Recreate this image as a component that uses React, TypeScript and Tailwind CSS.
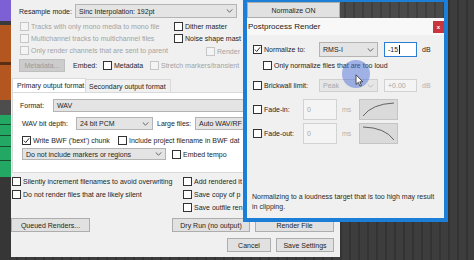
import type { ReactNode } from "react";

function Check({ checked = false, disabled = false }: { checked?: boolean; disabled?: boolean }) {
  return (
    <span
      className={`flex h-[9px] w-[9px] shrink-0 items-center justify-center border ${
        disabled ? "border-[#c6c6c6] bg-[#f4f4f4]" : "border-[#333333] bg-white"
      }`}
    >
      {checked && (
        <svg viewBox="0 0 8 8" className="h-[7px] w-[7px]">
          <path d="M1 4.2 3.1 6.3 7 1.5" fill="none" stroke="#222" strokeWidth="1.1" />
        </svg>
      )}
    </span>
  );
}

function CheckRow({
  label,
  checked,
  disabled,
  className = ""
}: {
  label: string;
  checked?: boolean;
  disabled?: boolean;
  className?: string;
}) {
  return (
    <div className={`flex shrink-0 items-center gap-[2px] overflow-hidden whitespace-nowrap ${className}`}>
      <Check checked={checked} disabled={disabled} />
      <span className={disabled ? "text-[#a3a3a3]" : "text-[#1e1e1e]"}>{label}</span>
    </div>
  );
}

function Chevron({ muted }: { muted?: boolean }) {
  return (
    <svg viewBox="0 0 8 5" className="h-[4px] w-[7px] shrink-0">
      <path d="M0.5 0.5 4 4 7.5 0.5" fill="none" stroke={muted ? "#b0b0b0" : "#444"} strokeWidth="1" />
    </svg>
  );
}

function Select({ label, className = "", disabled }: { label: string; className?: string; disabled?: boolean }) {
  return (
    <div
      className={`flex shrink-0 items-center justify-between overflow-hidden whitespace-nowrap border px-[3px] ${
        disabled ? "border-[#cfcfcf] bg-[#e6e6e6] text-[#a8a8a8]" : "border-[#b4b4b4] bg-[#e4e4e4]"
      } ${className}`}
    >
      <span>{label}</span>
      <Chevron muted={disabled} />
    </div>
  );
}

function Btn({ children, className = "", disabled }: { children: ReactNode; className?: string; disabled?: boolean }) {
  return (
    <div
      className={`flex h-full shrink-0 items-center justify-center whitespace-nowrap border ${
        disabled ? "border-[#bfbfbf] bg-[#cccccc] text-[#9b9b9b]" : "border-[#adadad] bg-[#e1e1e1]"
      } ${className}`}
    >
      {children}
    </div>
  );
}

function Field({ value, className = "", focused }: { value: string; className?: string; focused?: boolean }) {
  return (
    <div
      className={`flex h-full shrink-0 items-center border px-[3px] ${
        focused ? "border-[#2a7fd4] bg-white text-[#1e1e1e]" : "border-[#d2d2d2] bg-[#f4f4f4] text-[#a8a8a8]"
      } ${className}`}
    >
      {value}
      {focused && <span className="ml-[1px] h-[9px] w-[1px] bg-[#111]" />}
    </div>
  );
}

function TrackStrip() {
  return (
    <div className="flex w-[11px] shrink-0 flex-col">
      <div className="h-[21px] bg-[#7c60d4]" />
      <div className="h-[4px] bg-[#3a3a3a]" />
      <div className="h-[37px] bg-[#b3561f]" />
      <div className="h-[3px] bg-[#5a2e12]" />
      <div className="h-[35px] bg-[#b3561f]" />
      <div className="h-[15px] bg-[#4d4d4d]" />
      <div className="h-[9px] bg-[#22a863]" />
      <div className="h-[1px] bg-[#1a4a30]" />
      <div className="h-[10px] bg-[#22a863]" />
      <div className="h-[1px] bg-[#1a4a30]" />
      <div className="h-[10px] bg-[#22a863]" />
      <div className="h-[1px] bg-[#1a4a30]" />
      <div className="h-[13px] bg-[#22a863]" />
      <div className="h-[1px] bg-[#1a4a30]" />
      <div className="h-[16px] bg-[#22a863]" />
      <div className="flex-1 bg-[#363636]" />
    </div>
  );
}

// the right part of this dialog sits under the postprocess window; labels there
// only show what is visible up to its edge (x 243)
function RenderDialog() {
  return (
    <div className="flex h-[257px] w-[329px] shrink-0 flex-col bg-[#f0f0f0]">
      <div className="mt-[4px] flex h-[14px] items-center">
        <span className="ml-[8px] w-[56px] shrink-0">Resample mode:</span>
        <Select className="h-[14px] w-[162px]" label="Sinc Interpolation: 192pt" />
      </div>

      <div className="mt-[2px] flex h-[12px] items-center pl-[9px]">
        <CheckRow disabled className="w-[154px]" label="Tracks with only mono media to mono file" />
        <CheckRow className="w-[69px]" label="Dither master" />
      </div>
      <div className="flex h-[12px] items-center pl-[9px]">
        <CheckRow disabled className="w-[154px]" label="Multichannel tracks to multichannel files" />
        <CheckRow className="w-[69px]" label="Noise shape mast" />
      </div>
      <div className="flex h-[12px] items-center pl-[9px]">
        <CheckRow disabled className="w-[186px]" label="Only render channels that are sent to parent" />
        <CheckRow disabled className="mt-[3px] w-[37px]" label="Render" />
      </div>

      <div className="mt-[3px] flex h-[13px] items-center pl-[8px]">
        <Btn disabled className="w-[46px]">
          Metadata...
        </Btn>
        <span className="ml-[8px] w-[30px] shrink-0">Embed:</span>
        <CheckRow className="w-[47px]" label="Metadata" />
        <CheckRow disabled className="w-[93px]" label="Stretch markers/transient" />
      </div>

      <div className="mt-[7px] flex h-[13px] items-end pl-[1px]">
        <div className="flex h-[14px] w-[74px] items-center border border-b-0 border-[#d9d9d9] bg-white pl-[4px]">
          Primary output format
        </div>
        <div className="flex h-[13px] w-[85px] items-center border border-b-0 border-l-0 border-[#d9d9d9] pl-[3px]">
          Secondary output format
        </div>
      </div>

      <div className="ml-[1px] flex h-[81px] w-[322px] flex-col border border-[#d9d9d9] bg-white">
        <div className="mt-[6px] flex h-[13px] items-center pl-[7px]">
          <span className="w-[33px] shrink-0">Format:</span>
          <Select className="h-[13px] w-[270px]" label="WAV" />
        </div>
        <div className="mt-[5px] flex h-[13px] items-center pl-[9px]">
          <span className="w-[54px] shrink-0">WAV bit depth:</span>
          <Select className="h-[13px] w-[77px]" label="24 bit PCM" />
          <span className="ml-[4px] w-[38px] shrink-0">Large files:</span>
          <Select className="h-[13px] w-[110px]" label="Auto WAV/RF" />
        </div>
        <div className="mt-[5px] flex h-[10px] items-center pl-[9px]">
          <CheckRow checked className="w-[96px]" label="Write BWF ('bext') chunk" />
          <CheckRow className="w-[125px]" label="Include project filename in BWF dat" />
        </div>
        <div className="mt-[3px] flex h-[12px] items-center pl-[9px]">
          <Select className="h-[12px] w-[144px]" label="Do not include markers or regions" />
          <CheckRow className="ml-[6px]" label="Embed tempo" />
        </div>
      </div>

      <div className="mt-[2px] flex h-[13px] items-center pl-[1px]">
        <CheckRow className="w-[171px]" label="Silently increment filenames to avoid overwriting" />
        <CheckRow className="w-[60px]" label="Add rendered it" />
      </div>
      <div className="flex h-[13px] items-center pl-[1px]">
        <CheckRow className="w-[171px]" label="Do not render files that are likely silent" />
        <CheckRow className="w-[60px]" label="Save copy of p" />
      </div>
      <div className="flex h-[13px] items-center pl-[172px]">
        <CheckRow className="w-[60px]" label="Save outfile ren" />
      </div>

      <div className="mt-[4px] flex h-[14px] items-center">
        <Btn className="w-[79px]">Queued Renders...</Btn>
        <Btn className="ml-[82px] w-[78px]">Dry Run (no output)</Btn>
        <Btn className="ml-[5px] w-[79px]">Render File</Btn>
      </div>
      <div className="mt-[6px] flex h-[14px] items-center">
        <Btn className="ml-[216px] w-[44px]">Cancel</Btn>
        <Btn className="ml-[5px] w-[58px]">Save Settings</Btn>
      </div>
    </div>
  );
}

function FadeCurve({ out }: { out?: boolean }) {
  return (
    <div className="h-full w-[39px] shrink-0 border border-[#c4c4c4] bg-[#dadada]">
      <svg viewBox="0 0 37 19" className="h-full w-full">
        <path
          d={out ? "M3 3 Q25 3.5 34 16" : "M3 16 Q12 4 34 3"}
          fill="none"
          stroke="#555"
          strokeWidth="0.9"
        />
      </svg>
    </div>
  );
}

function PostprocessWindow() {
  return (
    <div className="absolute left-[243px] top-0 flex h-[222px] w-[205px] flex-col border-[4px] border-t-[2px] border-[#1b7fd7] bg-[#f0f0f0]">
      <div className="flex h-[16px] shrink-0 bg-[repeating-linear-gradient(90deg,#4a4a4a_0px,#4a4a4a_7px,#3f3f3f_7px,#3f3f3f_9px)]">
        <Btn className="h-[15px] w-[93px]">Normalize ON</Btn>
      </div>
      <div className="flex h-[17px] shrink-0 items-center justify-between bg-[#f8f8f8] pl-[1px]">
        <span className="text-[8px] text-[#222]">Postprocess Render</span>
        <div className="flex h-[12px] w-[11px] items-center justify-center bg-[#c8363b] text-[6px] font-bold text-white">
          x
        </div>
      </div>

      <div className="mt-[7px] flex h-[15px] items-center pl-[6px]">
        <CheckRow checked className="w-[66px]" label="Normalize to:" />
        <Select className="h-[15px] w-[59px]" label="RMS-I" />
        <Field focused className="ml-[6px] w-[33px]" value="-15" />
        <span className="ml-[5px]">dB</span>
      </div>
      <div className="mt-[3px] flex h-[10px] items-center pl-[16px]">
        <CheckRow label="Only normalize files that are too loud" />
      </div>
      <div className="mt-[9px] flex h-[13px] items-center pl-[6px]">
        <CheckRow className="w-[66px]" label="Brickwall limit:" />
        <Select disabled className="h-[13px] w-[59px]" label="Peak" />
        <Field className="ml-[6px] w-[33px]" value="+0.00" />
        <span className="ml-[5px] text-[#b0b0b0]">dB</span>
      </div>
      <div className="mt-[7px] flex h-[21px] items-center pl-[6px]">
        <CheckRow className="w-[50px]" label="Fade-in:" />
        <Field className="h-[14px] w-[34px]" value="0" />
        <span className="ml-[5px] w-[17px] text-[#b0b0b0]">ms</span>
        <FadeCurve />
      </div>
      <div className="mt-[3px] flex h-[21px] items-center pl-[6px]">
        <CheckRow className="w-[50px]" label="Fade-out:" />
        <Field className="h-[14px] w-[34px]" value="0" />
        <span className="ml-[5px] w-[17px] text-[#b0b0b0]">ms</span>
        <FadeCurve out />
      </div>

      <p className="ml-[5px] mt-[48px] leading-[10px] text-[#2a2a2a]">
        Normalizing to a loudness target that is too high may result
        <br />
        in clipping.
      </p>
    </div>
  );
}

export default function App() {
  return (
    <div className="relative flex h-[260px] w-[474px] overflow-hidden bg-[repeating-linear-gradient(90deg,#3d3d3d_0px,#3d3d3d_7px,#333333_7px,#333333_9px)] font-['Liberation_Sans',Arial,sans-serif] text-[7px] leading-none text-[#1e1e1e]">
      <TrackStrip />
      <RenderDialog />
      <PostprocessWindow />
      <div className="absolute left-[342px] top-[60px] h-[28px] w-[28px] rounded-full bg-[#4f72dc]/50" />
      <svg viewBox="0 0 10 15" className="absolute left-[355px] top-[74px] h-[13px] w-[9px]">
        <path d="M1 1 L1 12 L3.6 9.6 L5.6 14 L7.2 13.3 L5.3 9 L8.8 9 Z" fill="#fff" stroke="#111" strokeWidth="0.8" />
      </svg>
    </div>
  );
}
